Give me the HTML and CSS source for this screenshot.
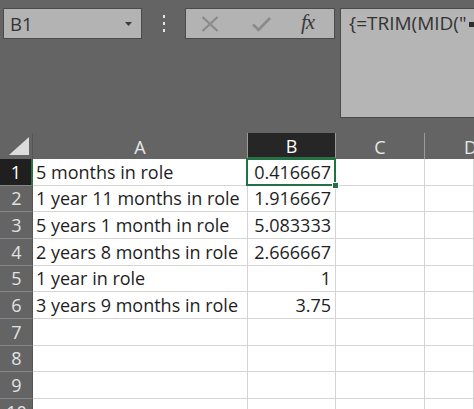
FILE: index.html
```html
<!DOCTYPE html>
<html>
<head>
<meta charset="utf-8">
<link rel="stylesheet" href="styles.css">
</head>
<body>
<div class="app">
  <div class="toolbar">
    <div class="namebox">
      <span class="name">B1</span>
      <svg class="caret" width="7" height="4" viewBox="0 0 7 4"><polygon points="0,0 7,0 3.5,4" fill="#3c3c3c"/></svg>
    </div>
    <div class="dots"><span></span><span></span><span></span></div>
    <div class="buttons">
      <svg class="ico" width="18" height="16" viewBox="0 0 18 16"><path d="M1.5 1 L16.5 15 M16.5 1 L1.5 15" stroke="#8a8a8a" stroke-width="2.2" fill="none"/></svg>
      <svg class="ico" width="19" height="16" viewBox="0 0 19 16"><path d="M1 8.5 L6.5 14 L18 2" stroke="#8a8a8a" stroke-width="2.6" fill="none"/></svg>
      <span class="fx">fx</span>
    </div>
    <div class="formula"><span class="ftext">{=TRIM(MID(" </span><span class="fclip"></span></div>
  </div>
  <div class="sheet">
    <div class="corner"><svg width="20" height="18" viewBox="0 0 20 18"><polygon points="20,0 20,18 0,18" fill="#dcdcdc"/></svg></div>
    <div class="colhead">A</div>
    <div class="colhead sel">B</div>
    <div class="colhead">C</div>
    <div class="colhead clip">D</div>

    <div class="rowhead sel">1</div>
    <div class="cell">5 months in role</div>
    <div class="cell num active">0.416667</div>
    <div class="cell"></div>
    <div class="cell"></div>

    <div class="rowhead">2</div>
    <div class="cell">1 year 11 months in role</div>
    <div class="cell num">1.916667</div>
    <div class="cell"></div>
    <div class="cell"></div>

    <div class="rowhead">3</div>
    <div class="cell">5 years 1 month in role</div>
    <div class="cell num">5.083333</div>
    <div class="cell"></div>
    <div class="cell"></div>

    <div class="rowhead">4</div>
    <div class="cell">2 years 8 months in role</div>
    <div class="cell num">2.666667</div>
    <div class="cell"></div>
    <div class="cell"></div>

    <div class="rowhead">5</div>
    <div class="cell">1 year in role</div>
    <div class="cell num">1</div>
    <div class="cell"></div>
    <div class="cell"></div>

    <div class="rowhead">6</div>
    <div class="cell">3 years 9 months in role</div>
    <div class="cell num">3.75</div>
    <div class="cell"></div>
    <div class="cell"></div>

    <div class="rowhead">7</div>
    <div class="cell"></div>
    <div class="cell"></div>
    <div class="cell"></div>
    <div class="cell"></div>

    <div class="rowhead">8</div>
    <div class="cell"></div>
    <div class="cell"></div>
    <div class="cell"></div>
    <div class="cell"></div>

    <div class="rowhead">9</div>
    <div class="cell"></div>
    <div class="cell"></div>
    <div class="cell"></div>
    <div class="cell"></div>

    <div class="rowhead">10</div>
    <div class="cell"></div>
    <div class="cell"></div>
    <div class="cell"></div>
    <div class="cell"></div>
  </div>
</div>
</body>
</html>
```
FILE: styles.css
```css
html, body {
  margin: 0;
  padding: 0;
  background: #646464;
}
.app {
  width: 474px;
  height: 409px;
  overflow: hidden;
  font-family: "Open Sans", "Liberation Sans", sans-serif;
}
.toolbar {
  height: 133px;
  box-sizing: border-box;
  padding: 8px 0 0 3px;
  display: flex;
  align-items: flex-start;
}
.namebox {
  width: 139px;
  height: 31px;
  box-sizing: border-box;
  border: 1px solid #4a4a4a;
  background: #b3b3b3;
  display: flex;
  align-items: center;
  justify-content: space-between;
  padding: 0 9px 0 6px;
}
.name {
  font-size: 18.5px;
  color: #333;
}
.caret {
  margin-top: 1px;
}
.dots {
  width: 43px;
  height: 31px;
  display: flex;
  flex-direction: column;
  align-items: center;
  justify-content: center;
  gap: 4px;
}
.dots span {
  width: 2px;
  height: 3px;
  background: #e6e6e6;
}
.buttons {
  width: 150px;
  height: 31px;
  box-sizing: border-box;
  border: 1px solid #4a4a4a;
  background: #b3b3b3;
  display: flex;
  align-items: center;
  padding: 0 0 0 15px;
}
.buttons .ico:nth-child(1) {
  margin-right: 33px;
}
.buttons .ico:nth-child(2) {
  margin-right: 30px;
}
.fx {
  font-family: "Liberation Serif", serif;
  font-style: italic;
  font-size: 21px;
  color: #3a3a3a;
  letter-spacing: -1px;
  line-height: 1;
  margin-top: -2px;
}
.formula {
  flex: 1;
  margin-left: 5px;
  height: 110px;
  box-sizing: border-box;
  border: 1px solid #4a4a4a;
  border-right: none;
  background: #b5b5b5;
  padding: 1px 0 0 8px;
  white-space: nowrap;
  overflow: hidden;
  display: flex;
  align-items: flex-start;
}
.ftext {
  font-size: 19px;
  color: #333;
  line-height: 26px;
}
.fclip {
  width: 6px;
  height: 5px;
  background: #2e2e2e;
  margin-top: 12px;
  margin-left: 2px;
  flex: none;
}
.sheet {
  display: grid;
  grid-template-columns: 33px 215px 88px 89px 49px;
  grid-template-rows: 26px;
  grid-auto-rows: 26.667px;
  font-size: 18px;
}
.corner {
  background: #646464;
  border-right: 1px solid #555;
  display: flex;
  align-items: flex-end;
  justify-content: flex-end;
  padding: 0 3px 4px 0;
}
.colhead {
  background: #646464;
  color: #e8e8e8;
  border-right: 1px solid #9a9a9a;
  display: flex;
  align-items: center;
  justify-content: center;
  box-sizing: border-box;
  padding-top: 1px;
}
.colhead.sel {
  background: #262626;
  color: #ffffff;
  border-bottom: 2px solid #2d6e45;
}
.colhead.clip {
  justify-content: flex-start;
  padding-left: 39px;
  border-right: none;
}
.rowhead {
  background: #646464;
  color: #e2e2e2;
  border-bottom: 1px solid #858585;
  border-right: 1px solid #555;
  box-sizing: border-box;
  display: flex;
  align-items: center;
  justify-content: center;
  padding-left: 1px;
}
.rowhead.sel {
  background: #1f1f1f;
  color: #ffffff;
  border-right: 2px solid #2d6e45;
}
.cell {
  background: #ffffff;
  color: #1e1e1e;
  border-right: 1px solid #d4d4d4;
  border-bottom: 1px solid #d4d4d4;
  box-sizing: border-box;
  display: flex;
  align-items: center;
  padding: 0 4px 0 3px;
  white-space: nowrap;
  overflow: visible;
}
.cell.num {
  justify-content: flex-end;
}
.cell.active {
  position: relative;
}
.cell.active::after {
  content: "";
  position: absolute;
  left: -2px;
  top: -1px;
  right: -1px;
  bottom: -1px;
  border: 2px solid #217346;
}
.cell.active::before {
  content: "";
  position: absolute;
  right: -4px;
  bottom: -4px;
  width: 5px;
  height: 5px;
  background: #217346;
  border: 1px solid #ffffff;
  z-index: 2;
}
```
